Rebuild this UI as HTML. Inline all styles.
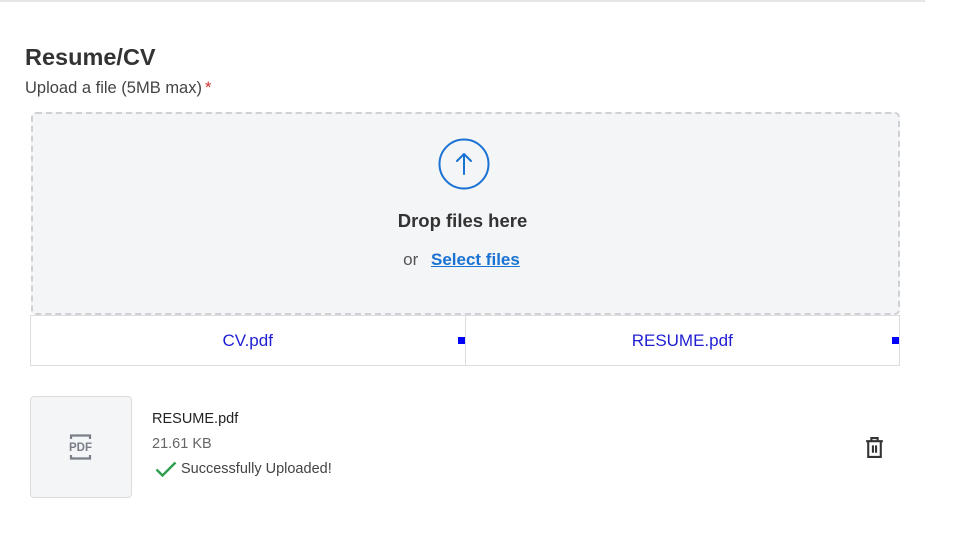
<!DOCTYPE html>
<html><head><meta charset="utf-8"><style>
*{box-sizing:border-box;margin:0;padding:0}
body{width:955px;height:550px;background:#fff;font-family:"Liberation Sans",Arial,sans-serif;position:relative;overflow:hidden;color:#333}
.topline{position:absolute;left:0;top:0;width:925px;height:2px;background:#e6e6e6}
h1{position:absolute;left:25px;top:44px;font-size:23.5px;font-weight:bold;color:#333}
.lbl{position:absolute;left:25px;top:79px;font-size:16.5px;color:#444}
.lbl span{color:#d32f2f;margin-left:3px}
.drop{position:absolute;left:31px;top:112px;width:869px;height:203px;background:#f4f5f7;border:2px dashed #cfd1d4;border-radius:5px}
.circle{position:absolute;left:405px;top:24px}
.dt{position:absolute;left:-3px;width:100%;top:96px;text-align:center;font-size:18.5px;font-weight:bold;color:#333}
.or{position:absolute;left:-4px;width:100%;top:136px;text-align:center;font-size:17px;color:#555}
.or a{color:#1a73d2;font-weight:bold;text-decoration:underline;margin-left:8px}
.tabs{position:absolute;left:30px;top:315px;width:870px;height:51px;border:1px solid #ddd;display:flex}
.tab{flex:1;position:relative;text-align:center;line-height:49px;font-size:17px;color:#1f1fd1}
.tab+.tab{border-left:1px solid #ddd}
.sq{position:absolute;right:0;top:21px;width:7px;height:7px;background:#0000ff}
.card{position:absolute;left:30px;top:396px;width:102px;height:102px;background:#f4f5f7;border:1px solid #dcdcdc;border-radius:4px}
.fn{position:absolute;left:152px;top:411px;font-size:14.5px;color:#222}
.fs{position:absolute;left:152px;top:436px;font-size:14.5px;color:#666}
.ok{position:absolute;left:155px;top:461px;font-size:14.5px;color:#444;display:flex;align-items:center}
.ok svg{margin-right:4px}
.trash{position:absolute;left:864px;top:436px}
</style></head><body>
<div class="topline"></div>
<h1>Resume/CV</h1>
<div class="lbl">Upload a file (5MB max)<span>*</span></div>
<div class="drop">
 <svg class="circle" width="52" height="52" viewBox="0 0 52 52"><circle cx="26" cy="26" r="24.5" fill="none" stroke="#1a73d2" stroke-width="2"/><path d="M26 36V16M19 23l7-7 7 7" fill="none" stroke="#1a73d2" stroke-width="2" stroke-linecap="round" stroke-linejoin="round"/></svg>
 <div class="dt">Drop files here</div>
 <div class="or">or <a>Select files</a></div>
</div>
<div class="tabs">
 <div class="tab">CV.pdf<div class="sq"></div></div>
 <div class="tab">RESUME.pdf<div class="sq"></div></div>
</div>
<div class="card">
 <svg style="position:absolute;left:38px;top:37px" width="24" height="26" viewBox="0 0 24 26"><path d="M2 5V1.5h19V5M2 21v3.5h19V21" fill="none" stroke="#7a7f87" stroke-width="2.2"/><text x="11.5" y="17" text-anchor="middle" font-family="Liberation Sans,sans-serif" font-size="11.5" font-weight="bold" fill="#7a7f87">PDF</text></svg>
</div>
<div class="fn">RESUME.pdf</div>
<div class="fs">21.61 KB</div>
<div class="ok"><svg width="22" height="16" viewBox="0 0 22 16"><path d="M1.5 8.5l6 6L20.5 1.5" fill="none" stroke="#2e9e4f" stroke-width="2.4"/></svg>Successfully Uploaded!</div>
<svg class="trash" width="21" height="23" viewBox="0 0 20 22"><path d="M2 5h16M7 5V2h6v3M4 5v15h12V5M8.5 9v7M11.5 9v7" fill="none" stroke="#333" stroke-width="2"/></svg>
</body></html>
